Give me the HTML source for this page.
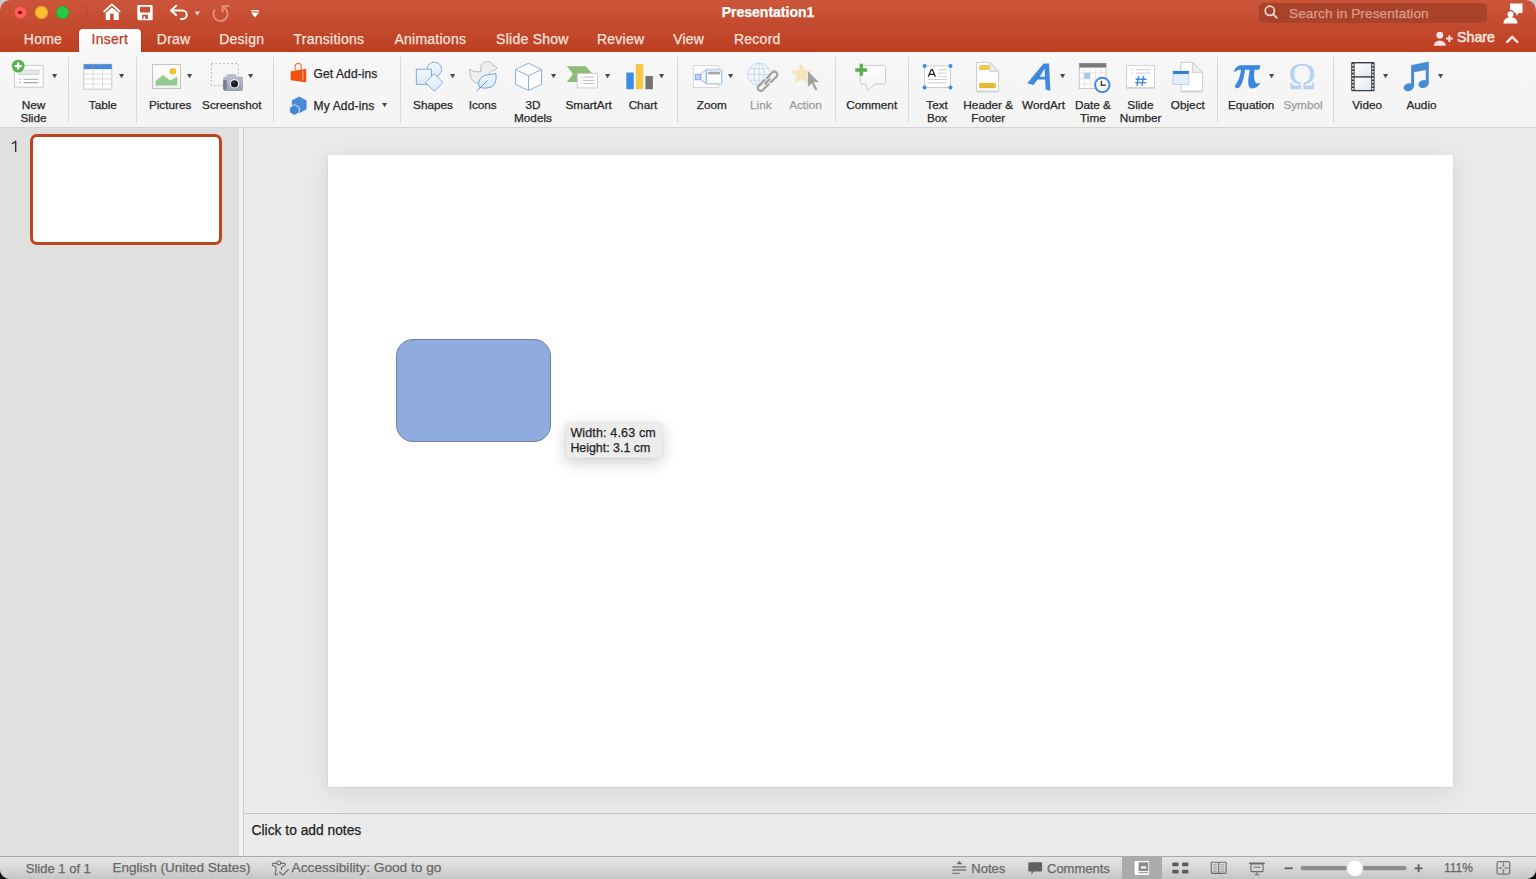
<!DOCTYPE html>
<html><head><meta charset="utf-8"><style>*{margin:0;padding:0;box-sizing:border-box}
html,body{width:1536px;height:879px;overflow:hidden;background:linear-gradient(#c9c9c9 0,#c9c9c9 440px,#111 440px);font-family:"Liberation Sans",sans-serif}
#win{position:absolute;left:0;top:0;width:1536px;height:879px;border-radius:10px;overflow:hidden;background:#eaeaea}
.a{position:absolute;display:block}
.t{position:absolute;white-space:nowrap;-webkit-text-stroke-width:0.25px}
svg{overflow:visible}
</style></head><body><div id="win">
<div class="a" style="left:0px;top:0px;width:1536px;height:52px;background:linear-gradient(#cb553a 0%,#c44a2f 50%,#bc3f22 100%)"></div>
<div class="a" style="left:13.5px;top:6px;width:13px;height:13px;border-radius:50%;background:#fe5f57;box-shadow:inset 0 0 0 0.8px #e0443e"></div>
<div class="a" style="left:35.0px;top:6px;width:13px;height:13px;border-radius:50%;background:#febc2e;box-shadow:inset 0 0 0 0.8px #dea123"></div>
<div class="a" style="left:56.3px;top:6px;width:13px;height:13px;border-radius:50%;background:#28c840;box-shadow:inset 0 0 0 0.8px #1aab29"></div>
<div class="a" style="left:18.3px;top:10.8px;width:3.4px;height:3.4px;border-radius:50%;background:#6e0000"></div>
<div class="a" style="left:86px;top:4px;width:1px;height:16px;background:rgba(120,30,10,.18)"></div>
<svg class="a" style="left:98px;top:0px" width="26" height="24" viewBox="0 0 26 24"><path d="M6.1 11.5 L13.9 4.4 L21.7 11.5" fill="none" stroke="#fff" stroke-width="1.7" stroke-linecap="round" stroke-linejoin="round"/><path d="M7.7 13 L13.9 7.6 L20.8 13 V20.1 H15.6 V13.7 H12.1 V20.1 H7.7 Z" fill="#fff"/></svg>
<svg class="a" style="left:136px;top:4px" width="18" height="18" viewBox="0 0 18 18"><path d="M2.6 1.1 H15.2 A1.5 1.5 0 0 1 16.7 2.6 V14.8 A1.5 1.5 0 0 1 15.2 16.3 H3.3 A2 2 0 0 1 1.3 14.3 V2.4 A1.3 1.3 0 0 1 2.6 1.1 Z" fill="#fff"/><rect x="4" y="2.8" width="10.1" height="5.7" rx="1" fill="#c84f33"/><path d="M6.1 14.8 V11.8 A1 1 0 0 1 7.1 10.8 H11 A1 1 0 0 1 12 11.8 V14.8 Z" fill="#c84f33"/><rect x="7.6" y="12.4" width="1.7" height="2.6" fill="#fff"/></svg>
<svg class="a" style="left:169px;top:4px" width="20" height="18" viewBox="0 0 20 18"><path d="M2.4 6.4 H13.5 A4.25 4.25 0 0 1 13.5 14.9 H12" fill="none" stroke="#fff" stroke-width="2" stroke-linecap="round"/><path d="M7.1 1.8 L2.1 6.4 L7.1 11" fill="none" stroke="#fff" stroke-width="2" stroke-linecap="round" stroke-linejoin="round"/></svg>
<svg class="a" style="left:193.5px;top:10.5px" width="7" height="5" viewBox="0 0 7 5"><path d="M0.5 0.5 H6 L3.25 4.4 Z" fill="#f5d9d0"/></svg>
<svg class="a" style="left:211px;top:3px" width="20" height="19" viewBox="0 0 20 19"><path d="M3.9 6.5 A7.1 7.1 0 1 0 14.9 6.3 L11.6 3" fill="none" stroke="#e0907c" stroke-width="1.9"/><path d="M11.4 3.1 H18.2 M11.6 2.2 V9.6" fill="none" stroke="#e0907c" stroke-width="1.9"/></svg>
<svg class="a" style="left:250px;top:9px" width="10" height="10" viewBox="0 0 10 10"><rect x="1" y="1" width="8" height="1.4" fill="#fff"/><path d="M1 3.4 H9 L5 8.6 Z" fill="#fff"/></svg>
<div class="t" style="left:568.00px;width:400px;text-align:center;top:4.15px;font-size:14px;line-height:16.8px;color:#ffffff;font-weight:bold;">Presentation1</div>
<div class="a" style="left:1259px;top:3px;width:228px;height:20px;background:#a8432a;border-radius:5px"></div>
<svg class="a" style="left:1263px;top:4px" width="16" height="16" viewBox="0 0 16 16"><circle cx="6.8" cy="6.8" r="4.6" fill="none" stroke="#f1d8d1" stroke-width="1.7"/><path d="M10.2 10.2 L13.8 13.8" stroke="#f1d8d1" stroke-width="1.8" stroke-linecap="round"/></svg>
<div class="t" style="left:1289.00px;top:5.93px;font-size:13.6px;line-height:16.32px;color:#dd9c8a;font-weight:normal;letter-spacing:0.1px">Search in Presentation</div>
<svg class="a" style="left:1502px;top:2px" width="22" height="22" viewBox="0 0 22 22"><path d="M8 1.5 H20.5 V11 H17 L14.2 13.8 V11 H8 Z" fill="#fff"/><circle cx="8.5" cy="12.2" r="3.6" fill="#fff" stroke="#c44a2f" stroke-width="1.2"/><path d="M1.4 21.5 A7.1 6.6 0 0 1 15.6 21.5 Z" fill="#fff"/></svg>
<div class="a" style="left:79px;top:28.5px;width:62px;height:24px;border-radius:4px 4px 0 0;background:linear-gradient(#ffffff,#f6f6f6);box-shadow:-0.5px 0 0 #a9301a,0.5px 0 0 #a9301a"></div>
<div class="t" style="left:-157.00px;width:400px;text-align:center;top:30.55px;font-size:14px;line-height:16.8px;color:#f8e4de;font-weight:normal;letter-spacing:0.25px">Home</div>
<div class="t" style="left:-90.20px;width:400px;text-align:center;top:30.55px;font-size:14px;line-height:16.8px;color:#c03a1c;font-weight:normal;letter-spacing:0.25px">Insert</div>
<div class="t" style="left:-26.40px;width:400px;text-align:center;top:30.55px;font-size:14px;line-height:16.8px;color:#f8e4de;font-weight:normal;letter-spacing:0.25px">Draw</div>
<div class="t" style="left:41.70px;width:400px;text-align:center;top:30.55px;font-size:14px;line-height:16.8px;color:#f8e4de;font-weight:normal;letter-spacing:0.25px">Design</div>
<div class="t" style="left:128.90px;width:400px;text-align:center;top:30.55px;font-size:14px;line-height:16.8px;color:#f8e4de;font-weight:normal;letter-spacing:0.25px">Transitions</div>
<div class="t" style="left:230.30px;width:400px;text-align:center;top:30.55px;font-size:14px;line-height:16.8px;color:#f8e4de;font-weight:normal;letter-spacing:0.25px">Animations</div>
<div class="t" style="left:332.40px;width:400px;text-align:center;top:30.55px;font-size:14px;line-height:16.8px;color:#f8e4de;font-weight:normal;letter-spacing:0.25px">Slide Show</div>
<div class="t" style="left:420.60px;width:400px;text-align:center;top:30.55px;font-size:14px;line-height:16.8px;color:#f8e4de;font-weight:normal;letter-spacing:0.25px">Review</div>
<div class="t" style="left:488.70px;width:400px;text-align:center;top:30.55px;font-size:14px;line-height:16.8px;color:#f8e4de;font-weight:normal;letter-spacing:0.25px">View</div>
<div class="t" style="left:557.30px;width:400px;text-align:center;top:30.55px;font-size:14px;line-height:16.8px;color:#f8e4de;font-weight:normal;letter-spacing:0.25px">Record</div>
<svg class="a" style="left:1433px;top:31px" width="21" height="16" viewBox="0 0 21 16"><circle cx="6.8" cy="4.2" r="3.4" fill="#f8e4de"/><path d="M0.8 14.8 A6 5.4 0 0 1 12.8 14.8 Z" fill="#f8e4de"/><path d="M13 7.6 H19.8 M16.4 4.2 V11" stroke="#f8e4de" stroke-width="2"/></svg>
<div class="t" style="left:1276.00px;width:400px;text-align:center;top:29.16px;font-size:14.2px;line-height:17.04px;color:#f8e4de;font-weight:normal;-webkit-text-stroke-width:0.55px">Share</div>
<svg class="a" style="left:1505px;top:35px" width="14" height="9" viewBox="0 0 14 9"><path d="M2.2 6.8 L7.2 1.9 L12.2 6.8" fill="none" stroke="#f8e4de" stroke-width="2.5" stroke-linecap="round" stroke-linejoin="round"/></svg>
<div class="a" style="left:0px;top:52px;width:1536px;height:75px;background:linear-gradient(#f7f7f7,#f4f4f4)"></div>
<div class="a" style="left:0px;top:126.5px;width:1536px;height:1.5px;background:#d4d4d4"></div>
<div class="a" style="left:68.0px;top:56.5px;width:1px;height:66px;background:#dadada"></div>
<div class="a" style="left:136.2px;top:56.5px;width:1px;height:66px;background:#dadada"></div>
<div class="a" style="left:272.9px;top:56.5px;width:1px;height:66px;background:#dadada"></div>
<div class="a" style="left:399.9px;top:56.5px;width:1px;height:66px;background:#dadada"></div>
<div class="a" style="left:677.0px;top:56.5px;width:1px;height:66px;background:#dadada"></div>
<div class="a" style="left:835.1px;top:56.5px;width:1px;height:66px;background:#dadada"></div>
<div class="a" style="left:908.0px;top:56.5px;width:1px;height:66px;background:#dadada"></div>
<div class="a" style="left:1217.4px;top:56.5px;width:1px;height:66px;background:#dadada"></div>
<div class="a" style="left:1333.3px;top:56.5px;width:1px;height:66px;background:#dadada"></div>
<div class="t" style="left:-166.50px;width:400px;text-align:center;top:97.98px;font-size:11.75px;line-height:14.1px;color:#262626;font-weight:normal;">New</div>
<div class="t" style="left:-166.50px;width:400px;text-align:center;top:110.78px;font-size:11.75px;line-height:14.1px;color:#262626;font-weight:normal;">Slide</div>
<div class="t" style="left:-97.20px;width:400px;text-align:center;top:97.98px;font-size:11.75px;line-height:14.1px;color:#262626;font-weight:normal;">Table</div>
<div class="t" style="left:-29.90px;width:400px;text-align:center;top:97.98px;font-size:11.75px;line-height:14.1px;color:#262626;font-weight:normal;">Pictures</div>
<div class="t" style="left:31.80px;width:400px;text-align:center;top:97.98px;font-size:11.75px;line-height:14.1px;color:#262626;font-weight:normal;">Screenshot</div>
<div class="t" style="left:313.60px;top:67.04px;font-size:12px;line-height:14.4px;color:#262626;font-weight:normal;letter-spacing:0.1px">Get Add-ins</div>
<div class="t" style="left:313.60px;top:98.94px;font-size:12px;line-height:14.4px;color:#262626;font-weight:normal;letter-spacing:0.15px">My Add-ins</div>
<div class="t" style="left:233.00px;width:400px;text-align:center;top:97.98px;font-size:11.75px;line-height:14.1px;color:#262626;font-weight:normal;">Shapes</div>
<div class="t" style="left:282.70px;width:400px;text-align:center;top:97.98px;font-size:11.75px;line-height:14.1px;color:#262626;font-weight:normal;">Icons</div>
<div class="t" style="left:333.10px;width:400px;text-align:center;top:97.98px;font-size:11.75px;line-height:14.1px;color:#262626;font-weight:normal;">3D</div>
<div class="t" style="left:333.00px;width:400px;text-align:center;top:110.78px;font-size:11.75px;line-height:14.1px;color:#262626;font-weight:normal;">Models</div>
<div class="t" style="left:388.70px;width:400px;text-align:center;top:97.98px;font-size:11.75px;line-height:14.1px;color:#262626;font-weight:normal;">SmartArt</div>
<div class="t" style="left:443.00px;width:400px;text-align:center;top:97.98px;font-size:11.75px;line-height:14.1px;color:#262626;font-weight:normal;">Chart</div>
<div class="t" style="left:511.80px;width:400px;text-align:center;top:97.98px;font-size:11.75px;line-height:14.1px;color:#262626;font-weight:normal;">Zoom</div>
<div class="t" style="left:560.80px;width:400px;text-align:center;top:97.98px;font-size:11.75px;line-height:14.1px;color:#9b9b9b;font-weight:normal;">Link</div>
<div class="t" style="left:605.50px;width:400px;text-align:center;top:97.98px;font-size:11.75px;line-height:14.1px;color:#9b9b9b;font-weight:normal;">Action</div>
<div class="t" style="left:671.70px;width:400px;text-align:center;top:97.98px;font-size:11.75px;line-height:14.1px;color:#262626;font-weight:normal;">Comment</div>
<div class="t" style="left:737.10px;width:400px;text-align:center;top:97.98px;font-size:11.75px;line-height:14.1px;color:#262626;font-weight:normal;">Text</div>
<div class="t" style="left:737.10px;width:400px;text-align:center;top:110.78px;font-size:11.75px;line-height:14.1px;color:#262626;font-weight:normal;">Box</div>
<div class="t" style="left:788.20px;width:400px;text-align:center;top:97.98px;font-size:11.75px;line-height:14.1px;color:#262626;font-weight:normal;">Header &</div>
<div class="t" style="left:788.20px;width:400px;text-align:center;top:110.78px;font-size:11.75px;line-height:14.1px;color:#262626;font-weight:normal;">Footer</div>
<div class="t" style="left:843.50px;width:400px;text-align:center;top:97.98px;font-size:11.75px;line-height:14.1px;color:#262626;font-weight:normal;">WordArt</div>
<div class="t" style="left:892.90px;width:400px;text-align:center;top:97.98px;font-size:11.75px;line-height:14.1px;color:#262626;font-weight:normal;">Date &</div>
<div class="t" style="left:892.90px;width:400px;text-align:center;top:110.78px;font-size:11.75px;line-height:14.1px;color:#262626;font-weight:normal;">Time</div>
<div class="t" style="left:940.40px;width:400px;text-align:center;top:97.98px;font-size:11.75px;line-height:14.1px;color:#262626;font-weight:normal;">Slide</div>
<div class="t" style="left:940.60px;width:400px;text-align:center;top:110.78px;font-size:11.75px;line-height:14.1px;color:#262626;font-weight:normal;">Number</div>
<div class="t" style="left:987.80px;width:400px;text-align:center;top:97.98px;font-size:11.75px;line-height:14.1px;color:#262626;font-weight:normal;">Object</div>
<div class="t" style="left:1051.20px;width:400px;text-align:center;top:97.98px;font-size:11.75px;line-height:14.1px;color:#262626;font-weight:normal;">Equation</div>
<div class="t" style="left:1103.00px;width:400px;text-align:center;top:97.98px;font-size:11.75px;line-height:14.1px;color:#9b9b9b;font-weight:normal;">Symbol</div>
<div class="t" style="left:1167.10px;width:400px;text-align:center;top:97.98px;font-size:11.75px;line-height:14.1px;color:#262626;font-weight:normal;">Video</div>
<div class="t" style="left:1221.50px;width:400px;text-align:center;top:97.98px;font-size:11.75px;line-height:14.1px;color:#262626;font-weight:normal;">Audio</div>
<svg class="a" style="left:51.5px;top:74.3px" width="5.2" height="4.2" viewBox="0 0 5.2 4.2"><path d="M0 0 H5.2 L2.6 4.2 Z" fill="#4a4a4a"/></svg>
<svg class="a" style="left:118.5px;top:74.3px" width="5.2" height="4.2" viewBox="0 0 5.2 4.2"><path d="M0 0 H5.2 L2.6 4.2 Z" fill="#4a4a4a"/></svg>
<svg class="a" style="left:187px;top:74.3px" width="5.2" height="4.2" viewBox="0 0 5.2 4.2"><path d="M0 0 H5.2 L2.6 4.2 Z" fill="#4a4a4a"/></svg>
<svg class="a" style="left:248px;top:74.3px" width="5.2" height="4.2" viewBox="0 0 5.2 4.2"><path d="M0 0 H5.2 L2.6 4.2 Z" fill="#4a4a4a"/></svg>
<svg class="a" style="left:450px;top:74.3px" width="5.2" height="4.2" viewBox="0 0 5.2 4.2"><path d="M0 0 H5.2 L2.6 4.2 Z" fill="#4a4a4a"/></svg>
<svg class="a" style="left:551.1px;top:74.3px" width="5.2" height="4.2" viewBox="0 0 5.2 4.2"><path d="M0 0 H5.2 L2.6 4.2 Z" fill="#4a4a4a"/></svg>
<svg class="a" style="left:604.7px;top:74.3px" width="5.2" height="4.2" viewBox="0 0 5.2 4.2"><path d="M0 0 H5.2 L2.6 4.2 Z" fill="#4a4a4a"/></svg>
<svg class="a" style="left:659.4px;top:74.3px" width="5.2" height="4.2" viewBox="0 0 5.2 4.2"><path d="M0 0 H5.2 L2.6 4.2 Z" fill="#4a4a4a"/></svg>
<svg class="a" style="left:727.6px;top:74.3px" width="5.2" height="4.2" viewBox="0 0 5.2 4.2"><path d="M0 0 H5.2 L2.6 4.2 Z" fill="#4a4a4a"/></svg>
<svg class="a" style="left:1059.9px;top:74.3px" width="5.2" height="4.2" viewBox="0 0 5.2 4.2"><path d="M0 0 H5.2 L2.6 4.2 Z" fill="#4a4a4a"/></svg>
<svg class="a" style="left:1269.2px;top:74.3px" width="5.2" height="4.2" viewBox="0 0 5.2 4.2"><path d="M0 0 H5.2 L2.6 4.2 Z" fill="#4a4a4a"/></svg>
<svg class="a" style="left:1383.3px;top:74.3px" width="5.2" height="4.2" viewBox="0 0 5.2 4.2"><path d="M0 0 H5.2 L2.6 4.2 Z" fill="#4a4a4a"/></svg>
<svg class="a" style="left:1437.5px;top:74.3px" width="5.2" height="4.2" viewBox="0 0 5.2 4.2"><path d="M0 0 H5.2 L2.6 4.2 Z" fill="#4a4a4a"/></svg>
<svg class="a" style="left:382px;top:103.3px" width="5.2" height="4.2" viewBox="0 0 5.2 4.2"><path d="M0 0 H5.2 L2.6 4.2 Z" fill="#4a4a4a"/></svg>
<svg class="a" style="left:0;top:52px" width="1536" height="75" viewBox="0 52 1536 75"><defs><linearGradient id="gw" x1="0" y1="0" x2="0" y2="1"><stop offset="0" stop-color="#ffffff"/><stop offset="1" stop-color="#f1f1f1"/></linearGradient><linearGradient id="gb" x1="0" y1="0" x2="0" y2="1"><stop offset="0" stop-color="#f4f8fe"/><stop offset="1" stop-color="#dce8f8"/></linearGradient><linearGradient id="gcam" x1="0" y1="0" x2="0" y2="1"><stop offset="0" stop-color="#b9bccb"/><stop offset="1" stop-color="#9a9eb3"/></linearGradient><filter id="sh" x="-20%" y="-20%" width="140%" height="140%"><feGaussianBlur in="SourceAlpha" stdDeviation="0.6"/><feOffset dy="0.3"/><feComponentTransfer><feFuncA type="linear" slope="0.12"/></feComponentTransfer><feMerge><feMergeNode/><feMergeNode in="SourceGraphic"/></feMerge></filter></defs><g filter="url(#sh)"><rect x="14.6" y="65.6" width="28.6" height="21.6" fill="#fff" stroke="#c9c9c9" stroke-width="0.9"/></g><rect x="18.9" y="70" width="20.2" height="4.6" fill="#e4e6ea" stroke="#c3c8d2" stroke-width="0.7"/><circle cx="20.2" cy="79.3" r="0.8" fill="#a4adbd"/><circle cx="20.2" cy="82.6" r="0.8" fill="#a4adbd"/><path d="M23.5 79.3 H38.2 M23.5 82.6 H38.2" stroke="#9ba6b8" stroke-width="1.1"/><circle cx="18.2" cy="66.1" r="6.9" fill="#f6f6f6"/><circle cx="18.2" cy="66.1" r="6.4" fill="#56b24e"/><path d="M18.2 62.6 V69.6 M14.7 66.1 H21.7" stroke="#fff" stroke-width="2.1"/><g filter="url(#sh)"><rect x="83.8" y="64.3" width="28" height="24.8" fill="#fff" stroke="#c7c7c7" stroke-width="0.9"/></g><rect x="83.8" y="64.2" width="28" height="5" fill="#4b8ad3"/><path d="M93.2 64.3 V89 M102.5 64.3 V89 M83.8 74 H111.8 M83.8 78.9 H111.8 M83.8 83.9 H111.8" stroke="#d0d0d0" stroke-width="0.8"/><path d="M93.2 64.3 V69.2 M102.5 64.3 V69.2" stroke="#3d7cc6" stroke-width="0.8"/><g filter="url(#sh)"><rect x="152.5" y="64.6" width="28" height="24" fill="url(#gw)" stroke="#bdbdbd" stroke-width="0.9"/></g><circle cx="172.9" cy="71.2" r="3.3" fill="#f1c232"/><path d="M155.6 85.5 V81.2 L163 75 L170.2 80.6 L177.2 76.6 V85.5 Z" fill="#92c98d"/><rect x="211.4" y="63.6" width="27" height="22" fill="none" stroke="#a6a6a6" stroke-width="0.9" stroke-dasharray="1.6 2.4"/><rect x="223.2" y="76.4" width="19.8" height="14.6" rx="2" fill="url(#gcam)"/><rect x="226.5" y="74.3" width="10" height="3.5" rx="1.2" fill="#b7bac9"/><rect x="223.2" y="80" width="3.4" height="9.5" fill="#737a92"/><circle cx="234.5" cy="83.8" r="4.6" fill="#fff"/><circle cx="234.5" cy="83.8" r="3.6" fill="#1d1d1f"/><circle cx="233.6" cy="82.8" r="0.8" fill="#666"/><path d="M295.2 70.6 V66.4 A3 3 0 0 1 301.2 66.4 V69.8" fill="none" stroke="#f37a4e" stroke-width="1.2"/><path d="M291 71.2 L305.4 68.9 A0.8 0.8 0 0 1 306.2 69.7 V81.4 A0.8 0.8 0 0 1 305.4 82.2 L291 80.2 A0.6 0.6 0 0 1 290.6 79.6 V71.8 A0.6 0.6 0 0 1 291 71.2 Z" fill="#f24e10"/><rect x="302.3" y="70.4" width="1.1" height="9.8" rx="0.5" fill="#ffb394"/><path d="M299.2 96.4 L306.6 100.4 V109.2 L299.2 113.2 L291.8 109.2 V100.4 Z" fill="#4a8ad9"/><path d="M294.4 104.6 L299.2 107.4 V112.6 L294.4 115.4 L289.6 112.6 V107.4 Z" fill="#4386d6" stroke="#f3f3f3" stroke-width="0.9"/><circle cx="434.3" cy="69.4" r="7.3" fill="url(#gb)" stroke="#74a3e3" stroke-width="0.9"/><rect x="416.3" y="69.2" width="15.2" height="15.2" fill="url(#gb)" stroke="#74a3e3" stroke-width="0.9"/><path d="M434.2 73.6 L443 82.5 L434.2 91.3 L425.4 82.5 Z" fill="url(#gb)" stroke="#74a3e3" stroke-width="0.9"/><path d="M469.7 69.3 C472 71 476 72.4 481.4 71.6 C480.2 69 480.4 65.6 482.4 63.6 C484.6 61.4 488.6 61 491 62.6 C492.2 63.4 493 64.6 493.4 66 C494.8 66.2 496.4 66.6 497.6 67.6 C496.2 69.2 494 70.4 491.6 71.2 C490.4 71.8 489.6 72.8 489.2 74 L478 83.4 C472.4 82.4 469.8 78 469.7 69.3 Z" fill="#efefef" stroke="#b5b5b5" stroke-width="0.9"/><path d="M479.3 87 C477.2 80.5 481 75.5 488 74.8 C491.5 74.4 494.4 74 495.8 73.5 C496.8 80 495.5 87.5 487 88 C484 88.3 481.4 88 479.3 87 Z" fill="url(#gb)" stroke="#5f97e0" stroke-width="0.9"/><path d="M476.6 91 L487.6 80.4" stroke="#4a88dc" stroke-width="0.9"/><path d="M528.5 63.2 L541.5 69.6 V84.4 L528.5 90.4 L515.5 84.4 V69.6 Z" fill="#fff" stroke="#78a7e6" stroke-width="0.9"/><path d="M515.5 69.6 L528.5 75.8 L541.5 69.6 M528.5 75.8 V90.4" fill="none" stroke="#78a7e6" stroke-width="0.9"/><path d="M566.8 66.2 H585.7 L592.8 74 L585.7 82 H566.8 L573 74 Z" fill="#8dbd7a"/><g filter="url(#sh)"><rect x="577.3" y="73.3" width="20.2" height="14.6" fill="#fff" stroke="#c4c4c4" stroke-width="0.8"/></g><path d="M580.6 77.2 H581.5 M580.6 80.4 H581.5 M580.6 83.6 H581.5" stroke="#9a9a9a" stroke-width="0.8"/><path d="M583.2 77.2 H594.2 M583.2 80.4 H594.2 M583.2 83.6 H594.2" stroke="#b4b4b4" stroke-width="0.9"/><rect x="626.3" y="72.6" width="7.4" height="16.6" rx="0.8" fill="#3d8ce4"/><rect x="635.8" y="64" width="7.4" height="25.2" rx="0.8" fill="#f6c945"/><rect x="645.4" y="75.9" width="7.5" height="13.3" rx="0.8" fill="#727272"/></svg>
<svg class="a" style="left:0;top:52px" width="1536" height="75" viewBox="0 52 1536 75"><defs><linearGradient id="gfilm" x1="0" y1="0" x2="1" y2="1"><stop offset="0" stop-color="#ffffff"/><stop offset="1" stop-color="#dfe8f6"/></linearGradient><filter id="sh2" x="-20%" y="-20%" width="140%" height="140%"><feGaussianBlur in="SourceAlpha" stdDeviation="0.7"/><feOffset dy="0.5"/><feComponentTransfer><feFuncA type="linear" slope="0.18"/></feComponentTransfer><feMerge><feMergeNode/><feMergeNode in="SourceGraphic"/></feMerge></filter></defs><rect x="693.3" y="65.6" width="25.3" height="21.8" fill="#fff" stroke="#d2d2d2" stroke-width="0.9"/><path d="M700.8 74.2 L706.3 69.3 V83.8 L700.8 79.8 Z" fill="#f2f6fd" stroke="#7eaae8" stroke-width="0.8"/><rect x="706.3" y="69.3" width="15.5" height="14.6" rx="1.2" fill="#fff" stroke="#7eaae8" stroke-width="0.9"/><rect x="706.3" y="69.3" width="15.5" height="2" fill="#cfe0f8"/><rect x="707.8" y="71.8" width="12.4" height="2.6" fill="#a6a6a6"/><rect x="695.2" y="74.2" width="5.6" height="5.6" fill="#bcd4f5" stroke="#6d9fe4" stroke-width="0.8"/><g fill="none" stroke="#b9d2f1" stroke-width="0.8"><circle cx="759.1" cy="74.4" r="11.4"/><ellipse cx="759.1" cy="74.4" rx="5" ry="11.4"/><path d="M759.1 63 V85.8 M747.7 74.4 H770.5 M749.3 68.6 H768.9 M749.3 80.2 H768.9"/></g><g fill="none" stroke="#a3a3a3" stroke-width="2.3" stroke-linecap="round" transform="translate(1.8 2.2)"><path d="M766.6 82.2 L761 87.8 A2.9 2.9 0 0 1 756.9 83.7 L762.5 78.1"/><path d="M769 80 L774.6 74.4 A2.9 2.9 0 0 0 770.5 70.3 L764.9 75.9"/><path d="M763.7 81.2 L767.8 77.1"/></g><rect x="0" y="0" width="0" height="0"/><path d="M801.5 62.3 L804.4 70.3 L812.9 70.5 L806.2 75.6 L808.6 83.8 L801.5 79 L794.4 83.8 L796.8 75.6 L790.1 70.5 L798.6 70.3 Z" fill="#f4e4b9"/><path d="M807.4 70.2 L819.6 82.4 L814.2 82.6 L817.9 89.6 L815.2 91 L811.6 83.9 L807.6 87.6 Z" fill="#a2a2a2" stroke="#f4f4f4" stroke-width="0.8" stroke-linejoin="round"/><path d="M862 65.4 H883.8 A1.8 1.8 0 0 1 885.6 67.2 V82.2 A1.8 1.8 0 0 1 883.8 84 H875 L867.2 91 L865.6 84 H862 A1.8 1.8 0 0 1 860.2 82.2 V67.2 A1.8 1.8 0 0 1 862 65.4 Z" fill="url(#gw)" stroke="#c6c6c6" stroke-width="0.9"/><path d="M861.3 63.8 V75.7 M855.3 70 H867" stroke="#f3f3f3" stroke-width="5.2"/><path d="M861.3 63.8 V75.7 M855.3 70 H867" stroke="#58ad4c" stroke-width="3.3"/><rect x="924.6" y="65.9" width="25.9" height="21.6" fill="#fff" stroke="#c9c9c9" stroke-width="0.9"/><path d="M928.2 76.8 L931.2 69.7 H932.4 L935.4 76.8 M929.4 74.3 H934.2" fill="none" stroke="#1e1e1e" stroke-width="1.2"/><path d="M938 69.8 H946.9 M938 73.1 H946.9 M938 76.4 H946.9 M928.1 79.5 H946.9 M928.1 82.8 H946.9" stroke="#c4c4c4" stroke-width="0.8"/><circle cx="924.6" cy="65.9" r="2" fill="#3c8be6"/><circle cx="950.5" cy="65.9" r="2" fill="#3c8be6"/><circle cx="924.6" cy="87.5" r="2" fill="#3c8be6"/><circle cx="950.5" cy="87.5" r="2" fill="#3c8be6"/><g filter="url(#sh2)"><path d="M976.6 62.4 H989.8 L998.6 71.4 V91 H976.6 Z" fill="#fff" stroke="#c9c9c9" stroke-width="0.9"/></g><path d="M989.8 62.4 V71.4 H998.6 Z" fill="#ececec" stroke="#c9c9c9" stroke-width="0.8" stroke-linejoin="round"/><rect x="979.2" y="65.1" width="10.4" height="4.9" fill="#f1c94f"/><rect x="979.2" y="83" width="16.6" height="5.2" fill="#e9b934"/><path d="M1027.3 83.3 L1043.6 63.6 H1049 L1050.4 90.8 L1045.6 89.4 L1045.2 79.6 H1037.6 L1033.5 84.9 Z M1039.8 76.7 H1045 L1044.6 68.6 Z" fill="#3d89e0" fill-rule="evenodd"/><rect x="1079.3" y="63.4" width="26.8" height="25.2" fill="#fff" stroke="#bdbdbd" stroke-width="0.8"/><rect x="1079.3" y="63.2" width="26.8" height="4.4" fill="#7a7a7a"/><path d="M1084.3 67.6 V88.6 M1089.9 67.6 V88.6 M1095.4 67.6 V88.6 M1100.9 67.6 V88.6 M1079.3 72.8 H1106.1 M1079.3 78.8 H1106.1 M1079.3 84 H1106.1" stroke="#dedede" stroke-width="0.8"/><rect x="1084.3" y="72.8" width="5.6" height="6" fill="#a5c7f1"/><circle cx="1102.3" cy="85" r="7.2" fill="#fff" stroke="#3a8ae4" stroke-width="2"/><path d="M1101.4 80.8 V85.2 H1105.8" fill="none" stroke="#444" stroke-width="1.5"/><g filter="url(#sh2)"><rect x="1126.6" y="65.4" width="28" height="22.2" fill="#fff" stroke="#cdcdcd" stroke-width="0.9"/></g><path d="M1131.5 69.8 H1133 M1131.5 73.1 H1133" stroke="#b9bfca" stroke-width="1"/><path d="M1135.7 69.8 H1150.5 M1135.7 73.1 H1150.5" stroke="#c9cdd6" stroke-width="1"/><path d="M1138.6 76 L1137 85.8 M1143.6 76 L1142 85.8 M1135.6 79.2 H1146.6 M1135.2 82.6 H1146.2" stroke="#3c88e0" stroke-width="1.4"/><g filter="url(#sh2)"><path d="M1180.8 62.4 H1192.6 L1202.6 72.4 V91 H1180.8 Z" fill="#fff" stroke="#c9c9c9" stroke-width="0.9"/></g><path d="M1192.6 62.4 V72.4 H1202.6 Z" fill="#efefef" stroke="#c9c9c9" stroke-width="0.8" stroke-linejoin="round"/><rect x="1173" y="71.2" width="15.8" height="13.3" fill="#e4eefb" stroke="#a8c6ef" stroke-width="0.8"/><rect x="1173" y="71" width="15.8" height="3" fill="#2f7fd8"/><path d="M1234 71.2 C1235.6 66.8 1238.2 65.2 1242 65.2 H1260.4 L1259.2 69.8 H1254.6 C1253.8 74 1253.6 79 1255.4 82.2 C1256.2 83.6 1257.8 83.8 1259.4 82.8 L1260 83.6 C1257.6 87.2 1254.8 88.6 1252.2 88.4 C1249.2 88 1248.2 85.4 1248.2 82.2 C1248.2 78 1249.2 73.8 1249.8 69.8 H1245 C1244.2 76.6 1242.4 83.4 1240.2 86.6 C1239 88.2 1237.2 88.6 1235.8 87.8 C1234.6 87 1234.8 85.2 1236 84 C1238.6 80.8 1240.4 75.6 1241 69.8 C1238.4 69.8 1236.4 70.4 1234.8 72 Z" fill="#3a87df"/><rect x="1351.2" y="62.1" width="23.4" height="29.2" rx="1" fill="#3c3c3c"/><rect x="1354.6" y="63.4" width="16.6" height="12.8" fill="url(#gfilm)"/><rect x="1354.6" y="77.6" width="16.6" height="12.4" fill="url(#gfilm)"/><rect x="1352.2" y="64.2" width="1.5" height="1.7" fill="#fff"/><rect x="1372.1" y="64.2" width="1.5" height="1.7" fill="#fff"/><rect x="1352.2" y="67.6" width="1.5" height="1.7" fill="#fff"/><rect x="1372.1" y="67.6" width="1.5" height="1.7" fill="#fff"/><rect x="1352.2" y="71" width="1.5" height="1.7" fill="#fff"/><rect x="1372.1" y="71" width="1.5" height="1.7" fill="#fff"/><rect x="1352.2" y="74.4" width="1.5" height="1.7" fill="#fff"/><rect x="1372.1" y="74.4" width="1.5" height="1.7" fill="#fff"/><rect x="1352.2" y="77.8" width="1.5" height="1.7" fill="#fff"/><rect x="1372.1" y="77.8" width="1.5" height="1.7" fill="#fff"/><rect x="1352.2" y="81.2" width="1.5" height="1.7" fill="#fff"/><rect x="1372.1" y="81.2" width="1.5" height="1.7" fill="#fff"/><rect x="1352.2" y="84.6" width="1.5" height="1.7" fill="#fff"/><rect x="1372.1" y="84.6" width="1.5" height="1.7" fill="#fff"/><rect x="1352.2" y="88" width="1.5" height="1.7" fill="#fff"/><rect x="1372.1" y="88" width="1.5" height="1.7" fill="#fff"/><path d="M1411.1 65.6 Q1411.1 65 1411.8 64.9 L1428 61.8 Q1428.8 61.7 1428.8 62.4 V84.2 L1425.8 84.2 V69.9 L1414.1 72.2 V87 L1411.1 87 Z" fill="#4a8bd6"/><ellipse cx="1408.6" cy="87.3" rx="5.1" ry="3.9" transform="rotate(-15 1408.6 87.3)" fill="#4a8bd6"/><ellipse cx="1423.5" cy="84.1" rx="5.1" ry="3.9" transform="rotate(-15 1423.5 84.1)" fill="#4a8bd6"/></svg>
<div class="t" style="left:1282px;top:58px;width:40px;text-align:center;font-family:'Liberation Serif',serif;font-size:37px;line-height:37px;color:#b6d2f3">&#937;</div>
<div class="a" style="left:0px;top:128px;width:239px;height:728px;background:#e0e0de"></div>
<div class="a" style="left:239px;top:128px;width:4px;height:728px;background:#f1f1f1"></div>
<div class="a" style="left:243px;top:128px;width:1px;height:728px;background:#cfcfcf"></div>
<div class="a" style="left:244px;top:128px;width:1292px;height:685px;background:#eaeaea"></div>
<svg class="a" style="left:10px;top:140px" width="10" height="13" viewBox="0 0 10 13"><path d="M2.2 3.6 Q4.6 2.8 5.7 1.2 V11.4" fill="none" stroke="#2e2e2e" stroke-width="1.35" stroke-linecap="round" stroke-linejoin="round"/></svg>
<div class="a" style="left:30px;top:134px;width:192px;height:111px;border:3.5px solid #be431f;border-radius:7px;background:#fff"></div>
<div class="a" style="left:328px;top:155px;width:1125px;height:632px;background:#fff;box-shadow:0 0.5px 1.5px rgba(0,0,0,.14),0 5px 24px rgba(0,0,0,.09)"></div>
<div class="a" style="left:396px;top:339px;width:155px;height:103px;border:1px solid #6d80a8;border-radius:17px;background:#90abdd"></div>
<div class="a" style="left:566px;top:422.5px;width:95.5px;height:35px;border-radius:2px;background:#ececec;box-shadow:0 0 0 0.5px rgba(0,0,0,.08),0 4px 16px rgba(0,0,0,.2)"></div>
<div class="t" style="left:570.40px;top:425.57px;font-size:12.5px;line-height:15.0px;color:#1f1f1f;font-weight:normal;letter-spacing:0.15px">Width: 4.63 cm</div>
<div class="t" style="left:570.40px;top:440.66px;font-size:12.4px;line-height:14.88px;color:#1f1f1f;font-weight:normal;">Height: 3.1 cm</div>
<div class="a" style="left:244px;top:812.6px;width:1292px;height:1.2px;background:#c4c4c4"></div>
<div class="a" style="left:244px;top:814px;width:1292px;height:42px;background:#ebebeb"></div>
<div class="t" style="left:251.60px;top:822.74px;font-size:13.8px;line-height:16.56px;color:#1e1e1e;font-weight:normal;">Click to add notes</div>
<div class="a" style="left:0px;top:856px;width:1536px;height:23px;background:linear-gradient(#e6e6e6,#dadada 45%,#c6c6c6)"></div>
<div class="a" style="left:0px;top:855.6px;width:1536px;height:1.2px;background:#a9a9a9"></div>
<div class="t" style="left:25.80px;top:860.80px;font-size:13px;line-height:15.6px;color:#676767;font-weight:normal;">Slide 1 of 1</div>
<div class="t" style="left:112.50px;top:860.32px;font-size:13.5px;line-height:16.2px;color:#676767;font-weight:normal;">English (United States)</div>
<div class="t" style="left:291.60px;top:860.13px;font-size:13.7px;line-height:16.44px;color:#676767;font-weight:normal;">Accessibility: Good to go</div>
<div class="t" style="left:971.30px;top:860.80px;font-size:13px;line-height:15.6px;color:#676767;font-weight:normal;">Notes</div>
<div class="t" style="left:1047.00px;top:860.80px;font-size:13px;line-height:15.6px;color:#676767;font-weight:normal;">Comments</div>
<div class="a" style="left:1122px;top:856.5px;width:39.5px;height:22.5px;background:#ababab"></div>
<div class="t" style="left:1444.00px;top:861.44px;font-size:12px;line-height:14.4px;color:#676767;font-weight:normal;">111%</div>
<svg class="a" style="left:0;top:855px" width="1536" height="24" viewBox="0 855 1536 24"><g fill="none" stroke="#6c6c6c" stroke-width="1.15" stroke-linecap="round" stroke-linejoin="round"><circle cx="278.8" cy="862.9" r="1.9"/><path d="M276.9 863.6 C275.2 863 272.4 862.6 272.2 864.4 C272 866 274.4 866.2 275.8 867 C276.6 868.2 275.6 871.6 275.2 874.2 C275.8 875.4 277.2 875 277.4 874.2"/><path d="M280.7 863.6 C282.4 863 285.2 862.6 285.4 864.4 C285.6 866 282.8 866.4 281.6 867.4 C281.2 868.2 281.4 869.2 281.6 869.6"/><path d="M279.6 872 L282.8 875.1 L288.4 869.5"/></g><path d="M956.3 864.2 L959.35 861 L962.4 864.2 Z" fill="#6c6c6c"/><path d="M952.4 867 H966.2 M952.4 870 H966.2 M952.4 873.4 H959.7" stroke="#7a7a7a" stroke-width="1.3"/><path d="M1029.3 862.2 H1041.1 A1 1 0 0 1 1042.1 863.2 V870.4 A1 1 0 0 1 1041.1 871.4 H1033.6 L1031.5 874.8 V871.4 H1029.3 A1 1 0 0 1 1028.3 870.4 V863.2 A1 1 0 0 1 1029.3 862.2 Z" fill="#606060"/><rect x="1134.6" y="861" width="14.5" height="14" rx="1" fill="#fff"/><rect x="1138.6" y="862.3" width="9.7" height="8.8" fill="#8c8c8c"/><rect x="1141" y="866.4" width="5.2" height="2" fill="#fff"/><rect x="1138.6" y="872.2" width="9.7" height="1" fill="#8c8c8c"/><rect x="1172.2" y="862.6" width="6.4" height="3.7" rx="1.2" fill="#5c5c5c"/><rect x="1172.2" y="869.8" width="6.4" height="3.7" rx="1.2" fill="#5c5c5c"/><rect x="1182" y="862.6" width="6.4" height="3.7" rx="1.2" fill="#5c5c5c"/><rect x="1182" y="869.8" width="6.4" height="3.7" rx="1.2" fill="#5c5c5c"/><g fill="none" stroke="#6c6c6c" stroke-width="1.1"><path d="M1211.3 862.2 H1217.5 A1 1 0 0 1 1218.7 863.2 V874 M1226.1 862.2 H1219.9 A1 1 0 0 0 1218.7 863.2 M1211.3 862.2 V872.6 A0.8 0.8 0 0 0 1212.1 873.4 H1218.7 H1225.3 A0.8 0.8 0 0 0 1226.1 872.6 V862.2"/></g><path d="M1213.2 864.4 H1216.8 M1213.2 866.2 H1216.8 M1213.2 868 H1216.8 M1213.2 869.8 H1216.8 M1213.2 871.4 H1216.8 M1220.6 864.4 H1224.2 M1220.6 866.2 H1224.2 M1220.6 868 H1224.2 M1220.6 869.8 H1224.2 M1220.6 871.4 H1224.2" stroke="#a0a0a0" stroke-width="0.9"/><rect x="1249.1" y="862.4" width="15.6" height="1.6" rx="0.5" fill="#6c6c6c"/><rect x="1250.9" y="864" width="12.2" height="7.6" rx="0.8" fill="none" stroke="#6c6c6c" stroke-width="1.1"/><rect x="1253.6" y="866.6" width="6.8" height="1.4" fill="#8a8a8a"/><path d="M1257 871.6 V874.4 M1254.6 874.8 H1259.4" stroke="#6c6c6c" stroke-width="1.1"/><rect x="1284.6" y="867.4" width="8.2" height="1.8" fill="#606060"/><rect x="1300.7" y="866.1" width="105.8" height="4.2" rx="2.1" fill="#8c8c8c"/><circle cx="1354.9" cy="868.3" r="8.2" fill="#fff" stroke="#d0d0d0" stroke-width="0.5"/><path d="M1414.6 868.3 H1422.6 M1418.6 864.3 V872.3" stroke="#606060" stroke-width="1.8"/><rect x="1497.1" y="861.7" width="12.6" height="12.4" rx="1.5" fill="none" stroke="#777" stroke-width="1.3"/><path d="M1503.4 862.5 V865.8 M1503.4 870.2 V873.4 M1498 867.95 H1501.2 M1505.6 867.95 H1508.8" stroke="#7a7a7a" stroke-width="1.1"/><path d="M1502 865.2 H1504.8 L1503.4 867 Z M1502 870.8 H1504.8 L1503.4 869 Z M1500.6 866.6 V869.3 L1502.4 867.95 Z M1506.2 866.6 V869.3 L1504.4 867.95 Z" fill="#777"/></svg>
</div></body></html>
